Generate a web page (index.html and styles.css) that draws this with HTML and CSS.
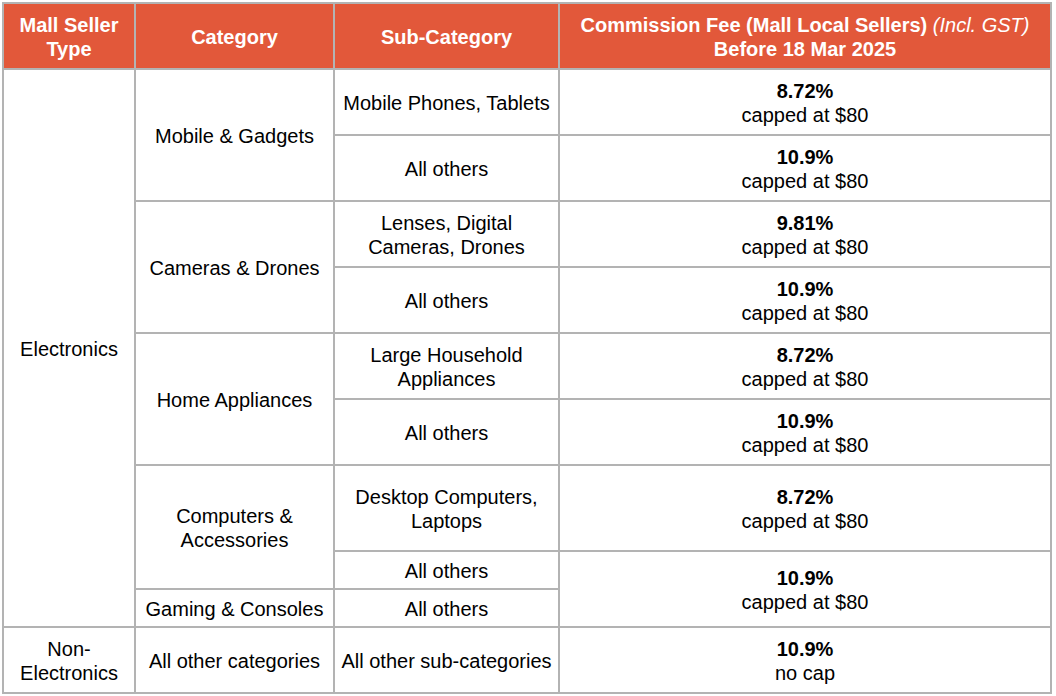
FILE: index.html
```html
<!DOCTYPE html>
<html>
<head>
<meta charset="utf-8">
<link rel="stylesheet" href="styles.css">
</head>
<body>
<table class="fees">
  <colgroup>
    <col class="c1"><col class="c2"><col class="c3"><col class="c4">
  </colgroup>
  <thead>
    <tr class="h66">
      <th>Mall Seller<br>Type</th>
      <th>Category</th>
      <th>Sub-Category</th>
      <th>Commission Fee (Mall Local Sellers) <em>(Incl. GST)</em><br>Before 18 Mar 2025</th>
    </tr>
  </thead>
  <tbody>
    <tr class="h66">
      <td rowspan="9">Electronics</td>
      <td rowspan="2">Mobile &amp; Gadgets</td>
      <td>Mobile Phones, Tablets</td>
      <td><b>8.72%</b><br>capped at $80</td>
    </tr>
    <tr class="h66">
      <td>All others</td>
      <td><b>10.9%</b><br>capped at $80</td>
    </tr>
    <tr class="h66">
      <td rowspan="2">Cameras &amp; Drones</td>
      <td>Lenses, Digital<br>Cameras, Drones</td>
      <td><b>9.81%</b><br>capped at $80</td>
    </tr>
    <tr class="h66">
      <td>All others</td>
      <td><b>10.9%</b><br>capped at $80</td>
    </tr>
    <tr class="h66">
      <td rowspan="2">Home Appliances</td>
      <td>Large Household<br>Appliances</td>
      <td><b>8.72%</b><br>capped at $80</td>
    </tr>
    <tr class="h66">
      <td>All others</td>
      <td><b>10.9%</b><br>capped at $80</td>
    </tr>
    <tr class="h86">
      <td rowspan="2">Computers &amp;<br>Accessories</td>
      <td>Desktop Computers,<br>Laptops</td>
      <td><b>8.72%</b><br>capped at $80</td>
    </tr>
    <tr class="h38">
      <td>All others</td>
      <td rowspan="2"><b>10.9%</b><br>capped at $80</td>
    </tr>
    <tr class="h38">
      <td>Gaming &amp; Consoles</td>
      <td>All others</td>
    </tr>
    <tr class="h66">
      <td>Non-<br>Electronics</td>
      <td>All other categories</td>
      <td>All other sub-categories</td>
      <td><b>10.9%</b><br>no cap</td>
    </tr>
  </tbody>
</table>
</body>
</html>
```

FILE: styles.css
```css
html, body {
  margin: 0;
  padding: 0;
  background: #ffffff;
}

body {
  padding: 2px 0 0 2px;
  font-family: "Liberation Sans", Arial, sans-serif;
  color: #000000;
}

.fees {
  table-layout: fixed;
  width: 1050px;
  border-collapse: separate;
  border-spacing: 0;
  border-top: 2px solid #b3b3b3;
  border-left: 2px solid #b3b3b3;
  font-size: 20px;
  line-height: 24px;
}

.c1 { width: 132px; }
.c2 { width: 199px; }
.c3 { width: 225px; }
.c4 { width: 492px; }

.fees th,
.fees td {
  border-right: 2px solid #b3b3b3;
  border-bottom: 2px solid #b3b3b3;
  padding: 2px 6px 0;
  text-align: center;
  vertical-align: middle;
  white-space: nowrap;
}

.fees th {
  background: #e2583a;
  color: #ffffff;
  font-weight: bold;
}

.fees th em {
  font-weight: normal;
  font-style: italic;
}

.fees td b {
  font-weight: bold;
}

.h66 { height: 66px; }
.h86 { height: 86px; }
.h38 { height: 38px; }
```
